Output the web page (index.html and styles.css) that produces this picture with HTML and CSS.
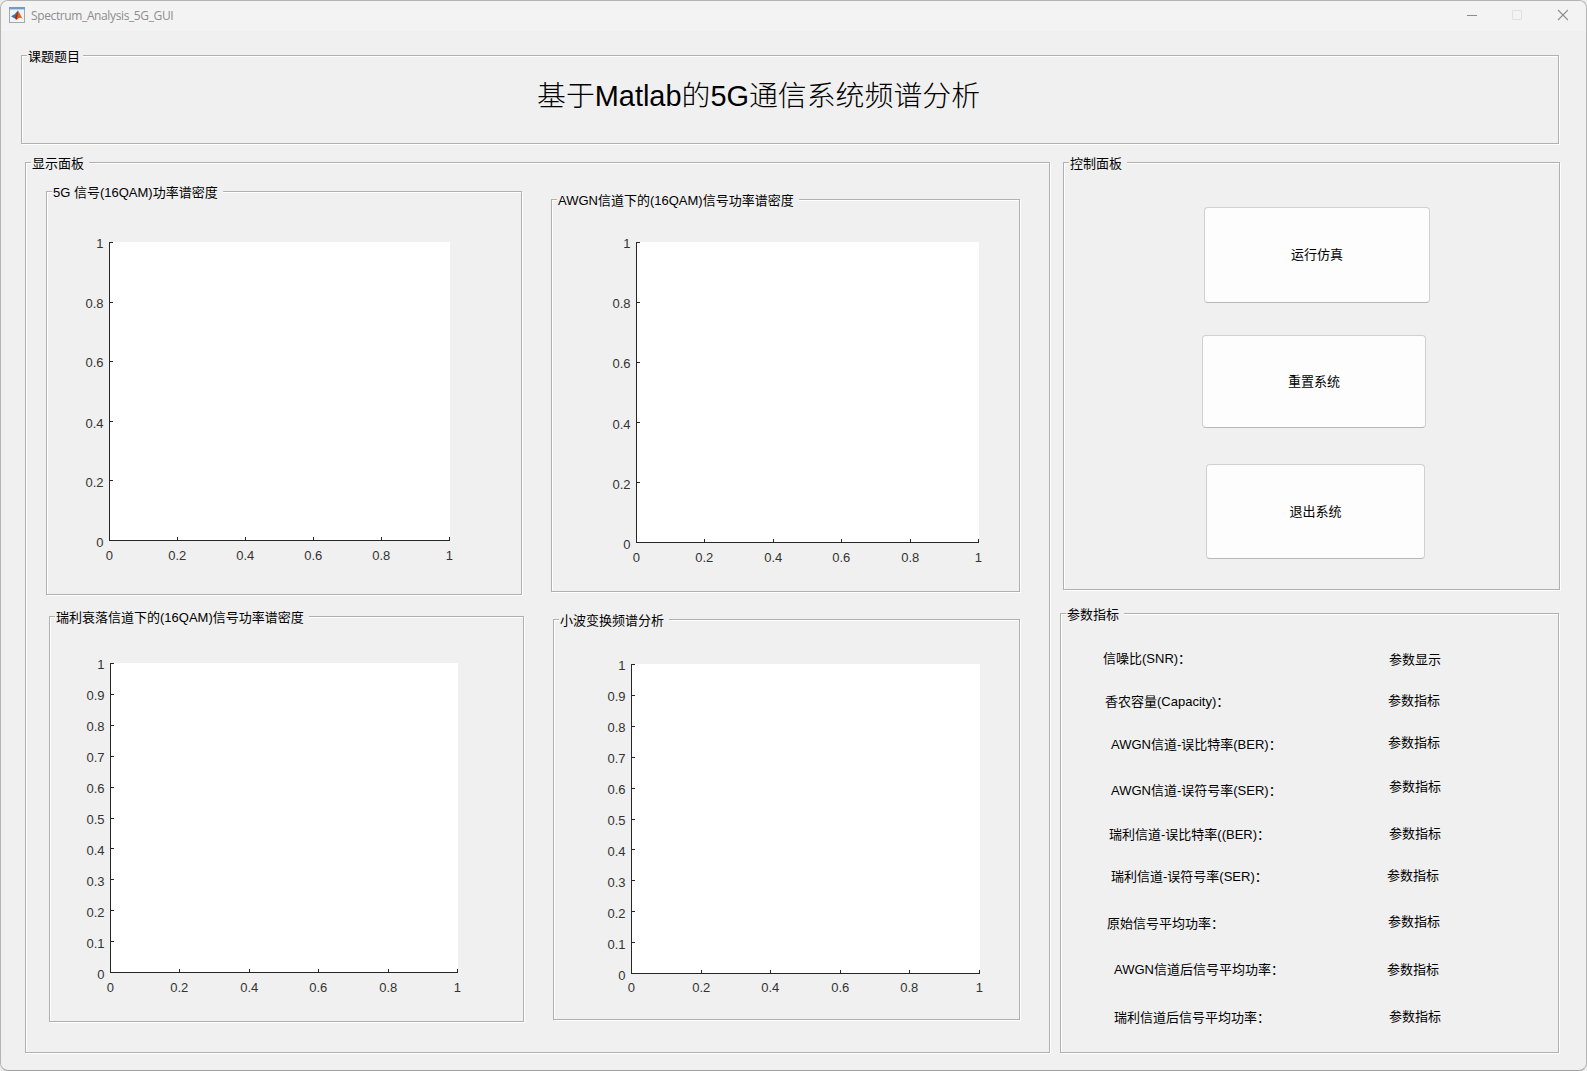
FILE: index.html
```
<!DOCTYPE html>
<html lang="zh-CN">
<head>
  <meta charset="UTF-8">
  <meta name="viewport" content="width=device-width, initial-scale=1.0">
  <title>Spectrum_Analysis_5G_GUI</title>
  <link rel="stylesheet" href="styles.css">
</head>
<body>
  <div class="window">
    <header class="titlebar">
      <svg class="logo" width="16" height="16" viewBox="0 0 16 16">
        <rect x="0.5" y="0.5" width="15" height="15" fill="#f1f4f7" stroke="#a3a8ad"/>
        <rect x="0" y="0" width="16" height="2.4" fill="#6f9ccb"/>
        <path d="M2 9.2 L5.2 7.6 L7.2 5.4 L8.4 4 L7.6 8.6 L5 11.2 L3.8 10.2 Z" fill="#2f77b8"/>
        <path d="M5 11.2 L7 8.4 L8.8 3.6 L10 6 L8.8 10.4 L7.2 13 L6 11.2 Z" fill="#8f2a1c"/>
        <path d="M8.8 3.6 C10.4 5 11.6 9 13.8 12 C12 10.6 10.6 10.4 9.4 11.6 L7.2 13 C8.6 10.6 9 7 8.8 3.6 Z" fill="#e2601b"/>
      </svg>
      <span class="caption">Spectrum_Analysis_5G_GUI</span>
      <svg class="controls" width="102" height="12" viewBox="0 0 102 12">
        <path d="M1 6.5 H11" stroke="#8c8c8c"/>
        <rect x="46.5" y="1.5" width="9" height="9" rx="0.5" fill="none" stroke="#e0e0e0"/>
        <path d="M92 1 L102 11 M102 1 L92 11" stroke="#8c8c8c" stroke-width="1.1"/>
      </svg>
    </header>

    <main>
      <section class="panel topic">
        <h2>课题题目</h2>
        <h1>基于Matlab的5G通信系统频谱分析</h1>
      </section>

      <div class="workspace">
        <section class="panel display">
          <h2>显示面板</h2>
          <div class="plots">
            <div class="column">
              <section class="panel signal">
                <h2>5G 信号(16QAM)功率谱密度</h2>
                <svg class="plot" width="341" height="299" data-steps="5"></svg>
              </section>
              <section class="panel rayleigh">
                <h2>瑞利衰落信道下的(16QAM)信号功率谱密度</h2>
                <svg class="plot" width="348" height="310" data-steps="10"></svg>
              </section>
            </div>
            <div class="column">
              <section class="panel awgn">
                <h2>AWGN信道下的(16QAM)信号功率谱密度</h2>
                <svg class="plot" width="343" height="301" data-steps="5"></svg>
              </section>
              <section class="panel wavelet">
                <h2>小波变换频谱分析</h2>
                <svg class="plot" width="349" height="310" data-steps="10"></svg>
              </section>
            </div>
          </div>
        </section>

        <aside class="sidebar">
          <section class="panel control">
            <h2>控制面板</h2>
            <button class="run">运行仿真</button>
            <button class="reset">重置系统</button>
            <button class="quit">退出系统</button>
          </section>

          <section class="panel params">
            <h2>参数指标</h2>
            <dl>
              <dt class="snr">信噪比(SNR)&#xFF1A;</dt>
              <dd class="snr">参数显示</dd>
              <dt class="capacity">香农容量(Capacity)&#xFF1A;</dt>
              <dd class="capacity">参数指标</dd>
              <dt class="awgn-ber">AWGN信道-误比特率(BER)&#xFF1A;</dt>
              <dd class="awgn-ber">参数指标</dd>
              <dt class="awgn-ser">AWGN信道-误符号率(SER)&#xFF1A;</dt>
              <dd class="awgn-ser">参数指标</dd>
              <dt class="ray-ber">瑞利信道-误比特率((BER)&#xFF1A;</dt>
              <dd class="ray-ber">参数指标</dd>
              <dt class="ray-ser">瑞利信道-误符号率(SER)&#xFF1A;</dt>
              <dd class="ray-ser">参数指标</dd>
              <dt class="power">原始信号平均功率&#xFF1A;</dt>
              <dd class="power">参数指标</dd>
              <dt class="awgn-power">AWGN信道后信号平均功率&#xFF1A;</dt>
              <dd class="awgn-power">参数指标</dd>
              <dt class="ray-power">瑞利信道后信号平均功率&#xFF1A;</dt>
              <dd class="ray-power">参数指标</dd>
            </dl>
          </section>
        </aside>
      </div>
    </main>
  </div>
  <script src="plot.js"></script>
</body>
</html>
```
FILE: styles.css
```
* {
  box-sizing: border-box;
  margin: 0;
  padding: 0;
}
body {
  background-color: #ececec;
  font-family: "Liberation Sans", "Noto Sans CJK SC", sans-serif;
  font-size: 13px;
  line-height: 16px;
  color: #000;
}
.window {
  width: 1587px;
  height: 1071px;
  border: 1px solid #b4b4b4;
  border-bottom-color: #a0a0a0;
  border-radius: 8px;
  background-color: #f0f0f0;
  overflow: hidden;
}

/* 标题栏 */
.titlebar {
  display: flex;
  align-items: center;
  height: 30px;
  padding: 0 18px 2px 8px;
  background-color: #f3f3f3;
}
.caption {
  flex: 1;
  margin-left: 6px;
  padding-top: 2px;
  font-family: "Open Sans", "Noto Sans", sans-serif;
  font-size: 12px;
  letter-spacing: -0.38px;
  color: #8e8e8e;
}

main {
  padding: 24px 0 0 20px;
}

/* 凹槽边框面板 */
.panel {
  border: 1px solid #b0b0b0;
  box-shadow: 1px 1px 0 #fff, inset 1px 1px 0 #fff;
}
.panel h2 {
  width: fit-content;
  height: 16px;
  margin: -8px 0 0 5px;
  padding: 0 5px 0 1px;
  background-color: #f0f0f0;
  font-size: 13px;
  font-weight: normal;
  line-height: 18px;
  white-space: nowrap;
}

.topic {
  width: 1538px;
  height: 89px;
}
.topic h2 {
  padding-right: 3px;
}
.topic h1 {
  margin: 14px 0 0 515px;
  font-size: 28.9px;
  font-weight: 300;
  line-height: 36px;
}

.workspace {
  display: flex;
  gap: 10px;
  margin: 18px 0 0 4px;
}
.display {
  width: 1025px;
  height: 891px;
}
.plots {
  display: flex;
  padding-left: 20px;
}
.column:first-child {
  width: 505px;
}
.signal {
  width: 476px;
  height: 404px;
  margin-top: 20px;
}
.rayleigh {
  width: 475px;
  height: 406px;
  margin: 21px 0 0 3px;
}
.awgn {
  width: 469px;
  height: 393px;
  margin-top: 28px;
}
.wavelet {
  width: 467px;
  height: 401px;
  margin: 27px 0 0 2px;
}

/* 坐标轴, 刻度文字画在 svg 外面 */
.plot {
  display: block;
  overflow: visible;
  background-color: #fff;
}
.plot path {
  fill: none;
  stroke: #262626;
}
.plot text {
  fill: #333;
  font-size: 13px;
}
.plot .x-label {
  text-anchor: middle;
}
.plot .y-label {
  text-anchor: end;
}
.signal .plot {
  margin: 42px 0 0 62px;
}
.rayleigh .plot {
  margin: 38px 0 0 60px;
}
.awgn .plot {
  margin: 34px 0 0 84px;
}
.wavelet .plot {
  margin: 36px 0 0 77px;
}
.wavelet .x-label {
  transform: translateY(-1px);
}

/* 控制面板 */
.control {
  width: 497px;
  height: 428px;
  margin-left: 3px;
}
.control button {
  display: block;
  border: 1px solid #d0d0d0;
  border-bottom-color: #b8b8b8;
  border-radius: 4px;
  background-color: #fdfdfd;
  font: inherit;
  color: #000;
}
.run {
  width: 226px;
  height: 96px;
  margin: 36px 0 0 140px;
}
.reset {
  width: 224px;
  height: 93px;
  margin: 32px 0 0 138px;
}
.quit {
  width: 219px;
  height: 95px;
  margin: 36px 0 0 142px;
}

/* 参数指标 */
.params {
  width: 499px;
  height: 440px;
  margin-top: 23px;
}
.params dl {
  display: grid;
  grid-template-columns: 327px 1fr;
  grid-template-rows: 43px 43px 46px 44px 42px 47px 46px 48px 16px;
  padding-top: 29px;
}
dt.snr { margin-left: 42px; }
dt.capacity { margin-left: 44px; }
dt.awgn-ber,
dt.awgn-ser { margin-left: 50px; }
dt.ray-ber { margin-left: 48px; }
dt.ray-ser { margin-left: 50px; }
dt.power { margin-left: 46px; }
dt.awgn-power,
dt.ray-power { margin-left: 53px; }
dd.snr { margin: 1px 0 0 1px; }
dd.capacity { margin-top: -1px; }
dd.awgn-ber { margin-top: -2px; }
dd.awgn-ser { margin: -4px 0 0 1px; }
dd.ray-ber { margin: -1px 0 0 1px; }
dd.ray-ser { margin: -1px 0 0 -1px; }
dd.power { margin-top: -2px; }
dd.awgn-power { margin-left: -1px; }
dd.ray-power { margin: -1px 0 0 1px; }
```
FILE: plot.js
```
// 在每个 svg 中画 0 ~ 1 的空坐标轴
const NS = 'http://www.w3.org/2000/svg';

function addLabel(svg, name, x, y, value) {
  const text = document.createElementNS(NS, 'text');
  text.setAttribute('class', name);
  text.setAttribute('x', x);
  text.setAttribute('y', y);
  text.textContent = Number(value.toFixed(1));
  svg.appendChild(text);
}

document.querySelectorAll('.plot').forEach((svg) => {
  const w = Number(svg.getAttribute('width')) - 1;
  const h = Number(svg.getAttribute('height')) - 1;
  const steps = Number(svg.dataset.steps);
  let d = `M0.5 0 V${h + 0.5} H${w + 1}`;

  for (let i = 0; i <= 5; i++) {
    const x = Math.round(w * i / 5);
    d += ` M${x + 0.5} ${h} v-3`;
    addLabel(svg, 'x-label', x + 0.3, h + 20, i / 5);
  }
  for (let i = 0; i <= steps; i++) {
    const y = Math.round(h - h * i / steps);
    d += ` M0 ${y + 0.5} h4`;
    addLabel(svg, 'y-label', -5.5, i < steps / 2 ? y + 7 : y + 6, i / steps);
  }

  const path = document.createElementNS(NS, 'path');
  path.setAttribute('d', d);
  svg.appendChild(path);
});
```
